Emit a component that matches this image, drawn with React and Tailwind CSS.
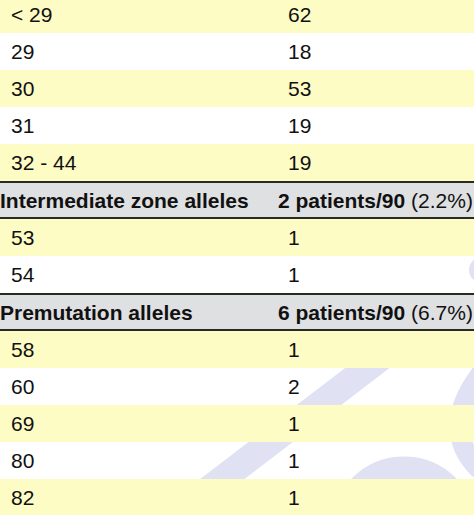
const groups = [
  {
    rows: [
      ['< 29', '62'],
      ['29', '18'],
      ['30', '53'],
      ['31', '19'],
      ['32 - 44', '19'],
    ],
  },
  {
    title: 'Intermediate zone alleles',
    count: '2 patients/90',
    pct: '(2.2%)',
    rows: [
      ['53', '1'],
      ['54', '1'],
    ],
  },
  {
    title: 'Premutation alleles',
    count: '6 patients/90',
    pct: '(6.7%)',
    rows: [
      ['58', '1'],
      ['60', '2'],
      ['69', '1'],
      ['80', '1'],
      ['82', '1'],
    ],
  },
];

function Watermark() {
  return (
    <svg
      className="absolute left-0 top-0 pointer-events-none"
      width="474"
      height="515"
      viewBox="0 0 474 515"
    >
      <g stroke="#e1e1f4" fill="none" strokeLinecap="round">
        <line x1="430" y1="320" x2="195" y2="500" strokeWidth="27" />
        <path d="M343 530 A61 61 0 0 1 465 530" strokeWidth="25" />
        <path d="M500 352 Q432 420 478 468" strokeWidth="20" />
      </g>
      <circle cx="482" cy="270" r="13" fill="#e1e1f4" />
    </svg>
  );
}

function DataRow({ left, right, striped }) {
  return (
    <div className={`relative flex h-[37px] items-center ${striped ? 'bg-[#fefcc5]' : ''}`}>
      <div className="w-[277px] pl-[11px]">{left}</div>
      <div className="flex-1 pl-[11px]">{right}</div>
    </div>
  );
}

function GroupHeader({ title, count, pct }) {
  return (
    <div className="relative flex h-[38px] items-center border-y-2 border-[#2a2a24] bg-[#dfe0e2]">
      <div className="w-[277px] font-bold">{title}</div>
      <div className="flex-1 pl-px whitespace-nowrap">
        <span className="font-bold">{count}</span> {pct}
      </div>
    </div>
  );
}

export default function App() {
  return (
    <div
      className="relative h-[515px] w-[474px] overflow-hidden bg-white text-[21px] leading-none text-[#111]"
      style={{ fontFamily: '"Liberation Sans", Arial, sans-serif' }}
    >
      <Watermark />
      <div className="-mt-[4px]">
        {groups.map((g, gi) => (
          <div key={gi}>
            {g.title && <GroupHeader title={g.title} count={g.count} pct={g.pct} />}
            {g.rows.map((r, ri) => (
              <DataRow key={ri} left={r[0]} right={r[1]} striped={ri % 2 === 0} />
            ))}
          </div>
        ))}
      </div>
    </div>
  );
}
